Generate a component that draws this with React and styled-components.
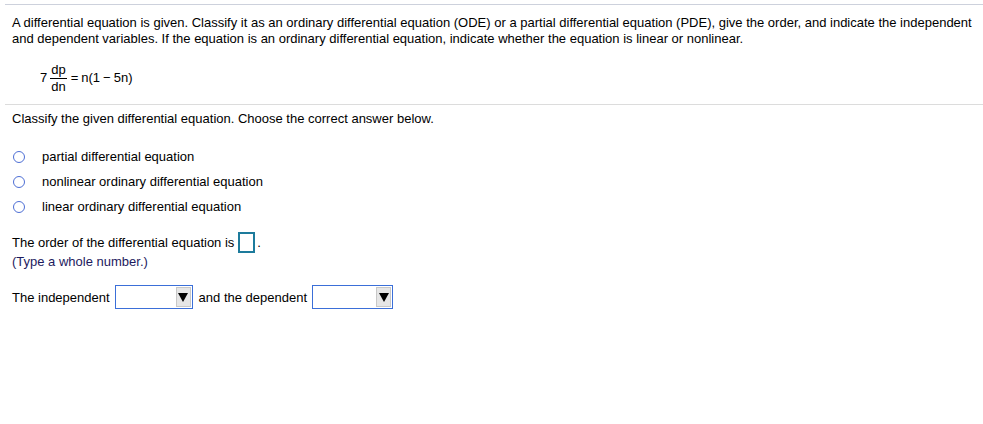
import React from "react";
import styled, { createGlobalStyle } from "styled-components";

const Global = createGlobalStyle`
  html, body { margin: 0; padding: 0; background: #fff; }
  body { font-family: "Liberation Sans", Arial, sans-serif; font-size: 13px; color: #000; }
`;

const Page = styled.div`
  padding: 4px 0 0 5px;
`;

const Section = styled.section`
  border-top: 1px solid ${(p) => p.$line};
  padding: ${(p) => p.$pad};
`;

const Para = styled.p`
  margin: 0;
  line-height: 16px;
  padding-right: 4px;
`;

const Equation = styled.div`
  display: flex;
  align-items: center;
  gap: 2px;
  margin: 15px 0 10px 28px;
  height: 32px;
  line-height: 14px;
`;

const Op = styled.span`
  margin: 0 ${(p) => p.$m || 0}px;
`;

const Frac = styled.span`
  display: inline-flex;
  flex-direction: column;
  align-items: center;
  margin: 0 1px;
`;

const Num = styled.span`
  border-bottom: 1px solid #000;
  padding: 0 1px 1px;
`;

const Den = styled.span`
  padding: 1px 1px 0;
`;

const Radios = styled.div`
  display: flex;
  flex-direction: column;
  gap: 9px;
  margin: 22px 0 0 1px;
`;

const RadioRow = styled.label`
  display: flex;
  align-items: center;
  height: 16px;
  line-height: 16px;
`;

const Circle = styled.span`
  width: 10px;
  height: 10px;
  border: 1.5px solid #4e6fd5;
  border-radius: 50%;
  margin-right: 17px;
  flex: none;
`;

const OrderLine = styled.div`
  display: flex;
  align-items: center;
  margin-top: 16px;
  height: 22px;
`;

const Box = styled.span`
  display: inline-block;
  width: 13px;
  height: 17px;
  border: 2px solid #1d7b9c;
  margin: 0 2px 0 4px;
`;

const Hint = styled.div`
  line-height: 16px;
  margin-top: 1px;
  color: #1d1a5e;
`;

const SelectRow = styled.div`
  display: flex;
  align-items: center;
  margin-top: 15px;
  height: 24px;
`;

const Select = styled.span`
  display: inline-flex;
  justify-content: flex-end;
  align-items: center;
  width: ${(p) => p.$w}px;
  height: 22px;
  border: 1px solid #3b6fd8;
  margin: 0 6px 0 5px;
  box-sizing: content-box;
`;

const Arrow = styled.span`
  display: flex;
  align-items: center;
  justify-content: center;
  width: 15px;
  height: 20px;
  margin-right: 1px;
  background: #e6e6e6;
  border: 1px solid #c8c8c8;
  box-sizing: border-box;
`;

const Triangle = () => (
  <svg width="10" height="10" viewBox="0 0 10 10">
    <path d="M0 1 L10 1 L5 10 Z" fill="#000" />
  </svg>
);

export default function App() {
  return (
    <>
      <Global />
      <Page>
        <Section $line="#cdd1dc" $pad="10px 0 0 7px">
          <Para>
            A differential equation is given. Classify it as an ordinary differential equation (ODE) or a partial differential equation (PDE), give the order, and indicate the independent and dependent variables. If the equation is an ordinary differential equation, indicate whether the equation is linear or nonlinear.
          </Para>
          <Equation>
            <span>7</span>
            <Frac>
              <Num>dp</Num>
              <Den>dn</Den>
            </Frac>
            <Op $m={1}>=</Op>
            <span>n(1</span>
            <Op $m={1}>−</Op>
            <span>5n)</span>
          </Equation>
        </Section>
        <Section $line="#dcdcdc" $pad="6px 0 0 7px">
          <Para>Classify the given differential equation. Choose the correct answer below.</Para>
          <Radios>
            <RadioRow><Circle />partial differential equation</RadioRow>
            <RadioRow><Circle />nonlinear ordinary differential equation</RadioRow>
            <RadioRow><Circle />linear ordinary differential equation</RadioRow>
          </Radios>
          <OrderLine>
            The order of the differential equation is<Box />.
          </OrderLine>
          <Hint>(Type a whole number.)</Hint>
          <SelectRow>
            The independent
            <Select $w={76}>
              <Arrow><Triangle /></Arrow>
            </Select>
            and the dependent
            <Select $w={79}>
              <Arrow><Triangle /></Arrow>
            </Select>
          </SelectRow>
        </Section>
      </Page>
    </>
  );
}
